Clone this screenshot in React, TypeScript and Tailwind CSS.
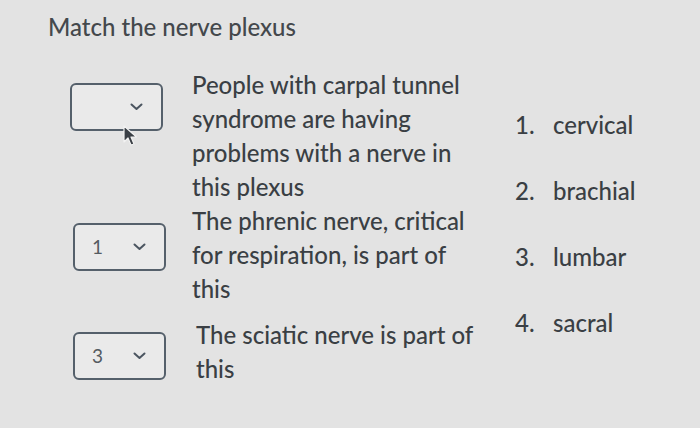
import React from "react"

const rows = [
  {
    value: "",
    lines: ["People with carpal tunnel", "syndrome are having", "problems with a nerve in", "this plexus"],
    selectTop: "mt-[15px]",
    selectLeft: "ml-0",
    textLeft: "ml-0",
    rowTop: "mt-0",
    cursor: true
  },
  {
    value: "1",
    lines: ["The phrenic nerve, critical", "for respiration, is part of", "this"],
    selectTop: "mt-[19px]",
    selectLeft: "ml-[3px]",
    textLeft: "ml-0",
    rowTop: "mt-0",
    cursor: false
  },
  {
    value: "3",
    lines: ["The sciatic nerve is part of", "this"],
    selectTop: "mt-[14px]",
    selectLeft: "ml-[3px]",
    textLeft: "ml-[4px]",
    rowTop: "mt-[12px]",
    cursor: false
  }
]

const options = ["cervical", "brachial", "lumbar", "sacral"]

function Chevron() {
  return (
    <svg width="13" height="8" viewBox="0 0 13 8" fill="none">
      <path d="M1.5 1.5 L6.5 6 L11.5 1.5" stroke="#4b5560" strokeWidth="2" strokeLinecap="round" strokeLinejoin="round" />
    </svg>
  )
}

function Cursor() {
  return (
    <svg className="absolute left-[51px] top-[40px]" width="16" height="22" viewBox="0 0 16 22">
      <path d="M1 1 L1 17 L5 13 L8 20 L11 19 L8 12 L13.5 12 Z" fill="#3a3f45" stroke="#f2f2f2" strokeWidth="1.2" strokeLinejoin="round" />
    </svg>
  )
}

function Select({ value, cursor }: { value: string; cursor: boolean }) {
  return (
    <div className="relative w-[93px] h-[48px] rounded-[6px] border-2 border-[#55606b] bg-[#eaeaea] flex items-center">
      <span className="w-[40px] pl-[17px] text-[19px] text-[#555b61]">{value}</span>
      <span className="ml-[18px] flex items-center">
        <Chevron />
      </span>
      {cursor && <Cursor />}
    </div>
  )
}

export default function App() {
  return (
    <main
      className="w-[700px] h-[428px] overflow-hidden bg-[#e3e3e3] text-[#3a3f44]"
      style={{ fontFamily: "Lato, 'Open Sans', sans-serif" }}
    >

      {/* TITLE */}

      <h1 className="pl-[48px] pt-[14px] text-[24px] leading-[25px] font-medium text-[#44484c]">
        Match the nerve plexus
      </h1>

      <div className="mt-[29px] flex">

        {/* QUESTIONS */}

        <div className="pl-[70px] w-[515px]">

          {rows.map((row, i) => (

            <div key={i} className={`flex ${row.rowTop}`}>

              <div className={`w-[122px] ${row.selectTop}`}>
                <div className={row.selectLeft}>
                  <Select value={row.value} cursor={row.cursor} />
                </div>
              </div>

              <div className={`text-[24px] leading-[34px] font-medium ${row.textLeft}`}>
                {row.lines.map((line, j) => (
                  <div key={j} className="whitespace-nowrap">
                    {line}
                  </div>
                ))}
              </div>

            </div>

          ))}

        </div>

        {/* OPTIONS */}

        <ol className="pt-[40px] space-y-[32px] text-[24px] leading-[34px] font-medium">

          {options.map((opt, i) => (
            <li key={i} className="flex">
              <span className="w-[38px]">{i + 1}.</span>
              <span>{opt}</span>
            </li>
          ))}

        </ol>

      </div>

    </main>
  )
}
